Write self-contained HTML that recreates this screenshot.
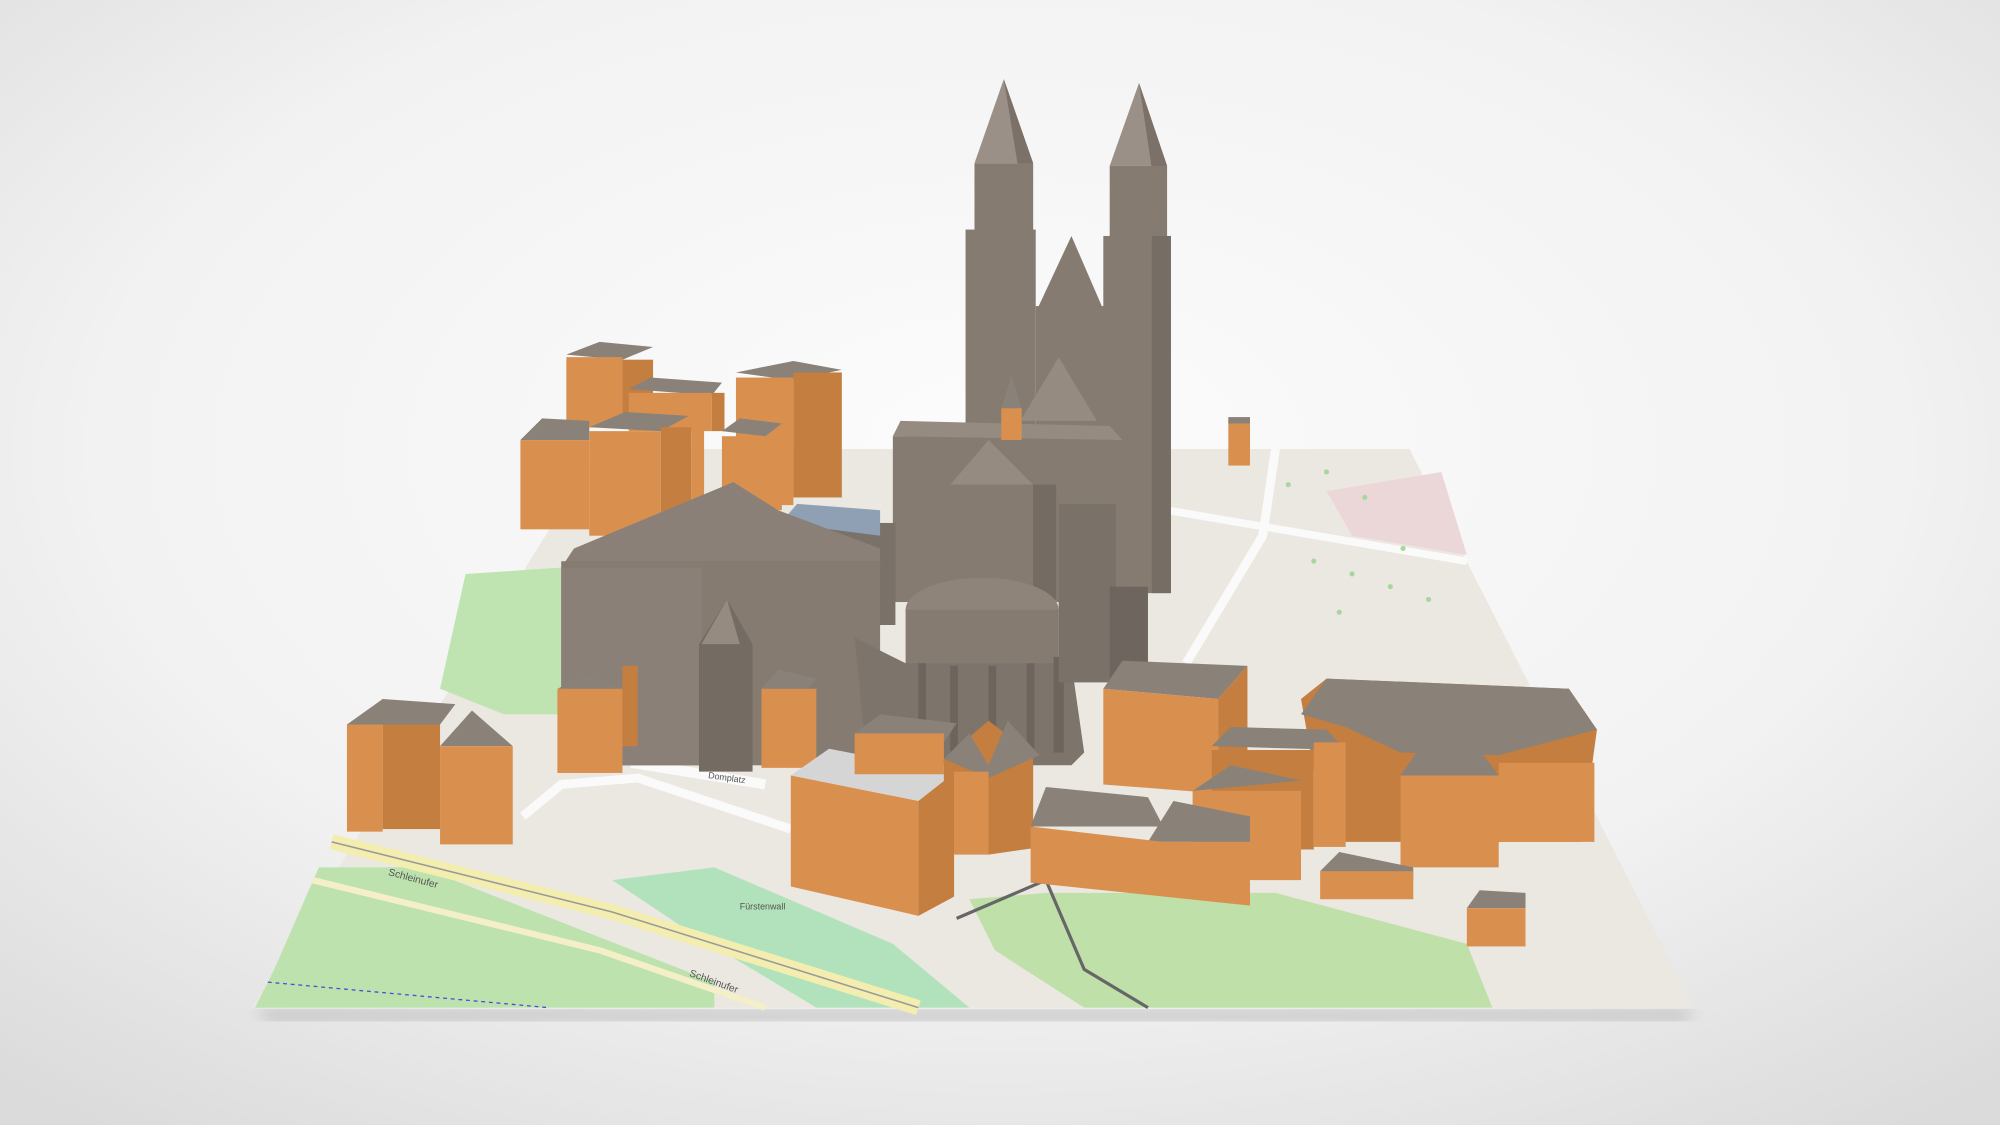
<!DOCTYPE html>
<html><head><meta charset="utf-8"><style>
html,body{margin:0;padding:0;width:2000px;height:1125px;overflow:hidden;background:#e6e6e6}
svg{display:block}
</style></head><body>
<svg width="2000" height="1125" viewBox="0 0 1568 882" preserveAspectRatio="none" xmlns="http://www.w3.org/2000/svg">
<defs>
<radialGradient id="bg" cx="50%" cy="40%" r="75%">
<stop offset="0" stop-color="#fcfcfc"/><stop offset="0.6" stop-color="#f2f2f2"/><stop offset="1" stop-color="#dbdbdb"/>
</radialGradient>
<filter id="blur"><feGaussianBlur stdDeviation="6"/></filter>
</defs>
<rect width="1568" height="882" fill="url(#bg)"/>
<polygon points="200,792 1330,792 1320,800 210,800" fill="#bbb" filter="url(#blur)"/>
<polygon points="470,352 1105,352 1328,790 197,790" fill="#ebe7e1"/>
<polygon points="250,680 330,680 560,770 560,790 200,790 215,760" fill="#bde2ae"/>
<polygon points="365,450 440,445 440,560 395,560 345,540" fill="#c0e3b2"/>
<polygon points="480,690 560,680 700,740 760,790 640,790 540,730" fill="#b2e2bb"/>
<polygon points="760,705 820,700 1000,700 1150,740 1170,790 850,790 780,745" fill="#bfe0a9"/>
<polygon points="1040,385 1130,370 1150,435 1060,420" fill="#ecd7d8"/>
<polyline points="260,660 480,715 720,790" fill="none" stroke="#f3eeb0" stroke-width="12"/>
<polyline points="260,660 480,715 720,790" fill="none" stroke="#999" stroke-width="1.2"/>
<polyline points="245,690 470,745 600,790" fill="none" stroke="#f4efc6" stroke-width="5"/>
<polyline points="930,520 990,420 1000,352" fill="none" stroke="#fafafa" stroke-width="7"/>
<polyline points="915,400 1150,440" fill="none" stroke="#fafafa" stroke-width="6"/>
<polyline points="750,720 820,690 850,760 900,790" fill="none" stroke="#666" stroke-width="2.5"/>
<polyline points="410,640 440,615 500,610 560,630 620,650" fill="none" stroke="#fafafa" stroke-width="7"/>
<polyline points="495,598 600,615" fill="none" stroke="#fafafa" stroke-width="8"/>
<polyline points="210,770 430,790" fill="none" stroke="#4a4ad8" stroke-width="1" stroke-dasharray="3,3"/>
<g fill="#a8d79a"><circle cx="1030" cy="440" r="2"/><circle cx="1060" cy="450" r="2"/><circle cx="1090" cy="460" r="2"/><circle cx="1120" cy="470" r="2"/><circle cx="1010" cy="380" r="2"/><circle cx="1040" cy="370" r="2"/><circle cx="1070" cy="390" r="2"/><circle cx="1050" cy="480" r="2"/><circle cx="1100" cy="430" r="2"/></g>
<polygon points="444,278 470,268 512,272 488,282" fill="#8a8178"/>
<rect x="444" y="280" width="44" height="55" fill="#d9904f"/><rect x="488" y="282" width="24" height="50" fill="#c47e40"/>
<polygon points="493,305 510,296 566,300 558,310" fill="#8a8178"/>
<rect x="493" y="308" width="65" height="30" fill="#d9904f"/><rect x="558" y="308" width="10" height="30" fill="#c47e40"/>
<polygon points="577,292 622,283 660,290 620,298" fill="#8a8178"/>
<rect x="577" y="296" width="45" height="100" fill="#d9904f"/><rect x="622" y="292" width="38" height="98" fill="#c47e40"/>
<polygon points="408,345 425,328 462,330 462,345" fill="#8a8178"/>
<rect x="408" y="345" width="54" height="70" fill="#d9904f"/>
<polygon points="462,335 490,323 540,326 518,338" fill="#8a8178"/>
<rect x="462" y="338" width="56" height="82" fill="#d9904f"/><rect x="518" y="335" width="24" height="80" fill="#c47e40"/><rect x="542" y="332" width="10" height="78" fill="#d9904f"/>
<polygon points="566,338 580,328 613,332 600,342" fill="#8a8178"/>
<rect x="566" y="342" width="47" height="58" fill="#d9904f"/>
<rect x="963" y="330" width="17" height="35" fill="#d9904f"/><rect x="963" y="327" width="17" height="5" fill="#8a8178"/>
<g fill="#857b71">
<polygon points="764,128 787,62 810,128" fill="#9a9087"/>
<polygon points="787,62 810,128 798,130" fill="#7b7168"/>
<rect x="764" y="128" width="46" height="55"/>
<rect x="757" y="180" width="55" height="170"/>
<polygon points="870,130 893,65 915,130" fill="#9a9087"/>
<polygon points="893,65 915,130 903,132" fill="#7b7168"/>
<rect x="870" y="130" width="45" height="58"/>
<rect x="865" y="185" width="53" height="280"/>
<rect x="903" y="185" width="15" height="280" fill="#766d64"/>
<polygon points="812,245 840,185 866,245"/>
<rect x="812" y="240" width="54" height="110"/>
<polygon points="800,330 830,280 860,330" fill="#958b81"/>
<rect x="700" y="342" width="180" height="130"/>
<polygon points="700,342 706,330 870,334 880,345" fill="#958b81"/>
<rect x="612" y="410" width="90" height="80" fill="#7a7168"/>
<polygon points="612,410 625,395 690,400 690,420" fill="#8fa0b5"/>
<polygon points="440,445 450,430 575,378 610,400 690,430 690,445" fill="#8a8077"/>
<rect x="440" y="440" width="250" height="160"/>
<rect x="440" y="445" width="110" height="155" fill="#8a8077"/>
<polygon points="548,505 570,470 590,505 590,605 548,605" fill="#746b62"/>
<polygon points="550,505 570,470 580,505" fill="#958b81"/>
<polygon points="745,380 775,345 810,380" fill="#958b81"/>
<rect x="745" y="380" width="65" height="95"/>
<rect x="810" y="380" width="18" height="90" fill="#746b62"/>
<ellipse cx="770" cy="478" rx="60" ry="25" fill="#8e847a"/>
<rect x="710" y="478" width="120" height="80"/>
<polygon points="670,500 710,520 840,520 850,590 840,600 680,600" fill="#7d746b"/>
<g fill="#6d655d"><rect x="720" y="520" width="6" height="80"/><rect x="745" y="522" width="6" height="80"/><rect x="775" y="522" width="6" height="80"/><rect x="805" y="520" width="6" height="70"/><rect x="826" y="515" width="8" height="75"/></g>
<rect x="830" y="395" width="45" height="140" fill="#7a7168"/>
<rect x="870" y="460" width="30" height="75" fill="#6e665e"/>
<rect x="785" y="320" width="16" height="25" fill="#d9904f"/>
<polygon points="785,320 793,295 801,320" fill="#8a8178"/>
</g>
<polygon points="272,568 300,548 357,552 345,568" fill="#8a8178"/>
<rect x="272" y="568" width="28" height="84" fill="#d9904f"/><rect x="300" y="568" width="45" height="82" fill="#c47e40"/>
<polygon points="345,585 370,557 402,585" fill="#8a8178"/>
<rect x="345" y="585" width="57" height="77" fill="#d9904f"/>
<polygon points="437,540 465,527 488,540" fill="#8a8178"/>
<rect x="437" y="540" width="51" height="66" fill="#d9904f"/><rect x="488" y="522" width="12" height="63" fill="#c47e40"/>
<polygon points="597,540 610,525 640,532 630,545" fill="#8a8178"/>
<rect x="597" y="540" width="43" height="62" fill="#d9904f"/>
<polygon points="620,608 650,587 748,606 720,628" fill="#d5d5d5"/>
<polygon points="620,608 720,628 720,718 620,695" fill="#d9904f"/>
<polygon points="720,628 748,606 748,703 720,718" fill="#c47e40"/>
<polygon points="670,575 690,560 750,567 740,582" fill="#8a8178"/>
<rect x="670" y="575" width="70" height="32" fill="#d9904f"/>
<polygon points="740,595 775,565 810,592 810,665 775,670 740,668" fill="#c47e40"/>
<polygon points="740,595 760,575 775,600 790,565 815,592 775,610" fill="#8a8178"/>
<rect x="748" y="605" width="27" height="65" fill="#d9904f"/>
<polygon points="865,540 880,518 978,522 955,548" fill="#8a8178"/>
<polygon points="865,540 955,548 955,622 865,615" fill="#d9904f"/>
<polygon points="955,548 978,522 978,605 955,622" fill="#c47e40"/>
<polygon points="1020,548 1040,532 1230,540 1252,572 1240,660 1040,660" fill="#c47e40"/>
<polygon points="1020,560 1040,532 1230,540 1252,572 1175,592 1098,590 1055,570" fill="#8a8178"/>
<polygon points="1098,608 1135,555 1175,608" fill="#8a8178"/>
<rect x="1098" y="608" width="77" height="72" fill="#d9904f"/>
<rect x="1175" y="598" width="75" height="62" fill="#d9904f"/>
<polygon points="950,585 965,570 1040,572 1055,588" fill="#8a8178"/>
<rect x="950" y="588" width="80" height="78" fill="#c47e40"/><rect x="1030" y="582" width="25" height="82" fill="#d9904f"/>
<polygon points="935,620 965,600 1020,612" fill="#8a8178"/>
<rect x="935" y="620" width="85" height="70" fill="#d9904f"/>
<polygon points="808,648 820,617 900,625 912,648" fill="#8a8178"/>
<polygon points="900,660 920,628 980,640 980,660" fill="#8a8178"/>
<polygon points="808,648 912,660 980,660 980,710 808,692" fill="#d9904f"/>
<polygon points="1035,683 1050,668 1108,680 1108,690" fill="#8a8178"/>
<rect x="1035" y="683" width="73" height="22" fill="#d9904f"/>
<polygon points="1150,712 1160,698 1196,700 1196,712" fill="#8a8178"/>
<rect x="1150" y="712" width="46" height="30" fill="#d9904f"/>
<text x="304" y="686" font-family="Liberation Sans, sans-serif" font-size="8" fill="#555" transform="rotate(15 304 686)">Schleinufer</text>
<text x="540" y="765" font-family="Liberation Sans, sans-serif" font-size="8" fill="#555" transform="rotate(20 540 765)">Schleinufer</text>
<text x="580" y="713" font-family="Liberation Sans, sans-serif" font-size="7" fill="#555">Fürstenwall</text>
<text x="555" y="610" font-family="Liberation Sans, sans-serif" font-size="7" fill="#555" transform="rotate(8 555 610)">Domplatz</text>
</svg>
</body></html>
